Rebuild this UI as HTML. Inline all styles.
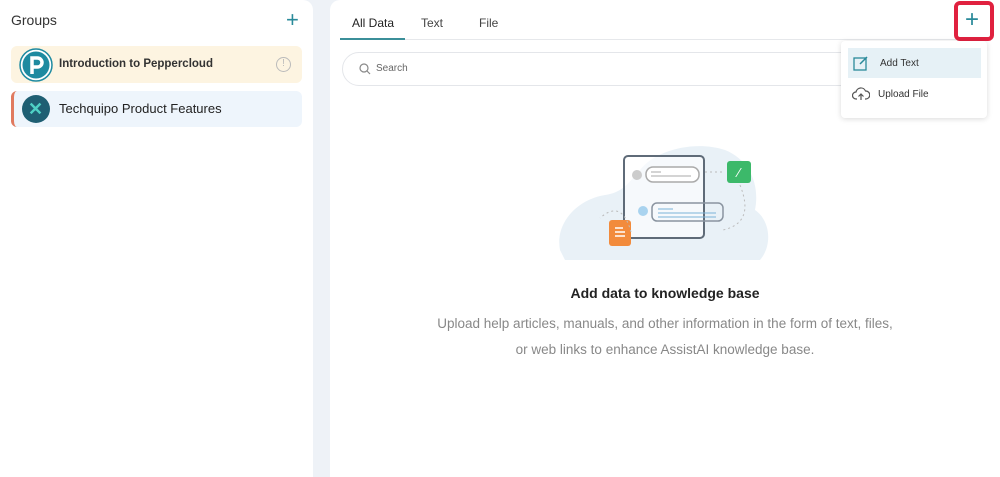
<!DOCTYPE html>
<html><head><meta charset="utf-8"><style>
*{box-sizing:border-box;margin:0;padding:0}
body{width:1000px;height:477px;background:#eef2f7;font-family:"Liberation Sans",sans-serif;position:relative;overflow:hidden;color:#222}
.left{position:absolute;left:0;top:0;width:313px;height:477px;background:#fff;border-radius:0 10px 0 0}
.right{position:absolute;left:330px;top:0;width:670px;height:477px;background:#fff;border-radius:10px 0 0 0}
.abs{position:absolute}
</style></head><body>
<div class="left">
  <div class="abs" style="left:11px;top:12px;font-size:14px;color:#333">Groups</div>
  <div class="abs" style="left:286px;top:9px;font-size:22px;color:#2a8a9a;font-weight:300;line-height:22px">+</div>
  <div class="abs" style="left:11px;top:46px;width:291px;height:37px;background:#fdf4e1;border-radius:6px"></div>
  <svg class="abs" style="left:19px;top:48px" width="34" height="34" viewBox="0 0 34 34"><circle cx="17" cy="17" r="16" fill="#fff" stroke="#1e8aa0" stroke-width="1.5"/><circle cx="17" cy="17" r="13.5" fill="#1e8aa0"/><path d="M13 26V10h5.5a4.5 4.5 0 0 1 0 9H13" fill="none" stroke="#fff" stroke-width="3.5"/></svg>
  <div class="abs" style="left:59px;top:58px;font-size:11.5px;font-weight:bold;color:#333">Introduction to Peppercloud</div>
  <div class="abs" style="left:276px;top:57px;width:15px;height:15px;border:1.5px solid #bbb;border-radius:50%;font-size:10px;color:#bbb;text-align:center;line-height:12px">!</div>
  <div class="abs" style="left:11px;top:91px;width:291px;height:36px;background:#eef5fc;border-radius:6px;border-left:3px solid #e07a5f"></div>
  <div class="abs" style="left:22px;top:95px;width:28px;height:28px;border-radius:50%;background:#1f5f73"></div>
  <div class="abs" style="left:28px;top:99px;font-size:18px;color:#4fd1c5;font-weight:bold;line-height:20px">✕</div>
  <div class="abs" style="left:59px;top:101px;font-size:13px;color:#222">Techquipo Product Features</div>
</div>
<div class="right">
  <div class="abs" style="left:22px;top:16px;font-size:12px;color:#222">All Data</div>
  <div class="abs" style="left:91px;top:16px;font-size:12px;color:#444">Text</div>
  <div class="abs" style="left:149px;top:16px;font-size:12px;color:#444">File</div>
  <div class="abs" style="left:10px;top:39px;width:640px;height:1px;background:#e6e8eb"></div>
  <div class="abs" style="left:10px;top:38px;width:65px;height:2px;background:#3b8f99"></div>
  <div class="abs" style="left:12px;top:52px;width:640px;height:34px;border:1px solid #e4e6ea;border-radius:17px"></div>
  <svg class="abs" style="left:29px;top:63px" width="12" height="12" viewBox="0 0 12 12"><circle cx="5" cy="5" r="4" fill="none" stroke="#888" stroke-width="1.2"/><path d="M8 8l3 3" stroke="#888" stroke-width="1.2"/></svg>
  <div class="abs" style="left:46px;top:63px;font-size:10px;color:#666">Search</div>
  <svg class="abs" style="left:225px;top:140px" width="220" height="125" viewBox="0 0 220 125">
    <path d="M5 110 C0 85 20 60 50 55 C70 52 75 40 85 30 C100 10 140 0 170 10 C195 20 205 45 200 70 C215 80 218 105 205 120 L10 120 Z" fill="#e9f1f7"/>
    <rect x="69" y="16" width="80" height="82" rx="4" fill="#fff" fill-opacity=".6" stroke="#5f6b78" stroke-width="2"/>
    <circle cx="82" cy="35" r="5" fill="#ccc"/>
    <rect x="91" y="27" width="53" height="15" rx="7" fill="#fff" stroke="#aaa" stroke-width="1.5"/>
    <path d="M96 32h10M96 36h40" stroke="#aaa"/>
    <circle cx="88" cy="71" r="5" fill="#a9d3ef"/>
    <rect x="97" y="63" width="71" height="18" rx="5" fill="none" stroke="#8a94a0" stroke-width="1.5"/>
    <path d="M103 69h15M103 73h58M103 77h58" stroke="#7bb3d8"/>
    <rect x="172" y="21" width="24" height="22" rx="3" fill="#3cb96a"/>
    <text x="184" y="37" font-size="13" fill="#fff" text-anchor="middle">&#x2215;</text>
    <rect x="54" y="80" width="22" height="26" rx="3" fill="#f28b3c"/>
    <path d="M60 88h8M60 92h10M60 96h10" stroke="#fff" stroke-width="1.5"/>
    <path d="M150 32h20M185 45 C195 70 190 85 168 90M76 92 C70 70 60 65 45 78" stroke="#bbb" stroke-dasharray="2 3" fill="none"/>
  </svg>
  <div class="abs" style="left:0;width:670px;top:285px;text-align:center;font-size:14px;font-weight:bold;color:#222">Add data to knowledge base</div>
  <div class="abs" style="left:0;width:670px;top:311px;text-align:center;font-size:13.5px;color:#888;line-height:26px">Upload help articles, manuals, and other information in the form of text, files,<br>or web links to enhance AssistAI knowledge base.</div>
  <div class="abs" style="left:624px;top:1px;width:40px;height:40px;border:4px solid #e0213f;border-radius:6px;background:#fff"></div>
  <div class="abs" style="left:635px;top:6px;font-size:24px;color:#2a8a9a;font-weight:300">+</div>
  <div class="abs" style="left:511px;top:41px;width:146px;height:77px;background:#fff;border-radius:4px;box-shadow:0 1px 6px rgba(0,0,0,.15)"></div>
  <div class="abs" style="left:518px;top:48px;width:133px;height:30px;background:#e6f1f6"></div>
  <svg class="abs" style="left:523px;top:55px" width="16" height="16" viewBox="0 0 16 16"><rect x="1" y="3" width="12" height="12" fill="none" stroke="#2a8a9a" stroke-width="1.3"/><path d="M7 9l7-7" stroke="#2a8a9a" stroke-width="1.5"/></svg>
  <div class="abs" style="left:550px;top:58px;font-size:10px;color:#333">Add Text</div>
  <svg class="abs" style="left:522px;top:87px" width="18" height="14" viewBox="0 0 18 14"><path d="M5 12H4a3.5 3.5 0 0 1 0-7 5 5 0 0 1 9.5-1A3.5 3.5 0 0 1 14 12h-1M9 13V7M6.5 9.5L9 7l2.5 2.5" fill="none" stroke="#555" stroke-width="1.2"/></svg>
  <div class="abs" style="left:548px;top:89px;font-size:10px;color:#333">Upload File</div>
</div>
</body></html>
